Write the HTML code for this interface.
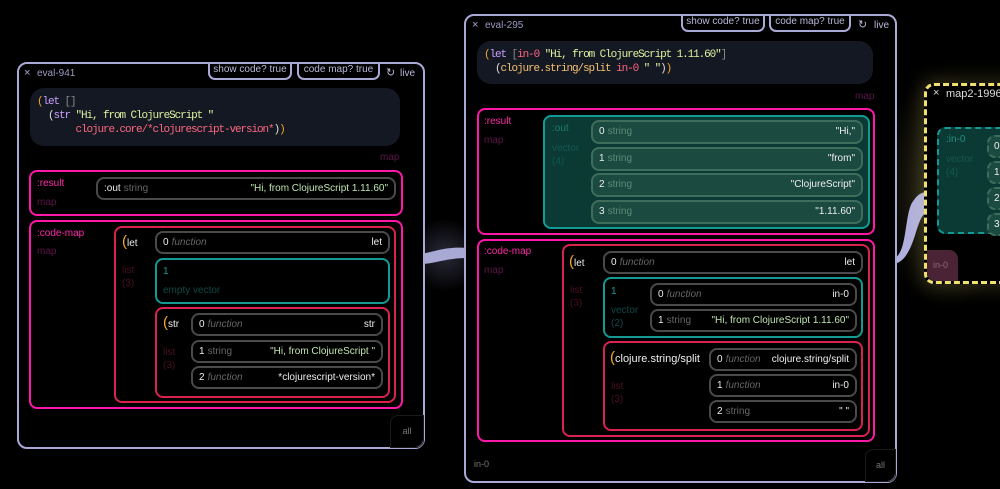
<!DOCTYPE html>
<html><head><meta charset="utf-8"><style>
*{box-sizing:border-box;margin:0;padding:0}
body{width:1000px;height:489px;background:#000;position:relative;overflow:hidden;font-family:"Liberation Sans",sans-serif;font-size:10px;color:#ddd}
.a{position:absolute}
.panel{position:absolute;border:2px solid #a9a9d6;border-radius:10px;background:#000}
.btn{position:absolute;border:2px solid #a9a9d6;border-top:none;border-radius:0 0 7px 7px;color:#b8b8d8;font-size:10px;text-align:center;line-height:16px}
.code{position:absolute;background:#131822;border-radius:14px;font-family:"Liberation Mono",monospace;font-size:11px;letter-spacing:-1.1px;line-height:14px;padding:7px 0 0 7px;white-space:pre;color:#ddd}
.pink{position:absolute;border:2px solid #ff18a8;border-radius:8px}
.red{position:absolute;border:2px solid #d8234f;border-radius:8px}
.teal{position:absolute;border:2px solid #149a94;border-radius:8px}
.pill{position:absolute;border:2px solid #4a4a4a;border-radius:8px;height:23px;font-size:10px;line-height:19px;padding:0 6px;color:#eee}
.pill .r{position:absolute;right:6px;top:0}
.fn{color:#666;font-style:italic;margin-left:3px}
.st{color:#666;margin-left:3px}
.gs{color:#bfe6b0}
.k{color:#ff2aa8;font-size:10px}
.m{color:#5c1648;font-size:10px}
.l{color:#4a1020;font-size:10px;line-height:13px}
.par{color:#f5a623;font-size:15px}
.tp{position:absolute;border:2px solid #3e6d5c;border-radius:8px;height:24px;background:#1b4a40;font-size:10px;line-height:20px;padding:0 6px;color:#eee}
.tp .r{position:absolute;right:6px;top:0}
</style></head><body>

<div class="a" style="left:405px;top:215px;width:80px;height:80px;background:radial-gradient(circle,#2a2a3a 0%,#000 65%)"></div>
<svg class="a" style="left:420px;top:240px" width="50" height="30"><path d="M0 14 C15 12 25 6 48 8 L48 18 C25 18 15 24 0 24 Z" fill="#a9a9d6"/></svg>

<div class="a" style="left:870px;top:60px;width:130px;height:260px;background:radial-gradient(ellipse at 60% 50%,#2e2c1a 0%,#000 65%)"></div>
<svg class="a" style="left:894px;top:180px" width="36" height="90"><path d="M0 78 C14 74 10 30 20 20 C24 14 28 12 34 12 L34 32 C28 34 26 40 22 52 C16 72 10 82 0 84 Z" fill="#b0b0e0"/></svg>

<!-- Panel 1 -->
<div class="panel" style="left:17px;top:62px;width:408px;height:387px"></div>
<div class="a" style="left:24px;top:67px;color:#a9a9d6;font-size:11px">×</div>
<div class="a" style="left:37px;top:68px;color:#9a9ac0;font-size:10px">eval-941</div>
<div class="btn" style="left:208px;top:62px;width:84px">show code? true</div>
<div class="btn" style="left:297px;top:62px;width:83px">code map? true</div>
<div class="a" style="left:386px;top:66px;color:#b8b8d8;font-size:11px">↻</div>
<div class="a" style="left:400px;top:68px;color:#b8b8d8">live</div>
<div class="code" style="left:30px;top:88px;width:370px;height:58px"><span style="color:#f5a623">(</span><span style="color:#c9a0ff">let</span> <span style="color:#888">[]</span>
  (<span style="color:#c9a0ff">str</span> <span style="color:#dff0a0">"Hi, from ClojureScript "</span>
       <span style="color:#ff6680">clojure.core/*clojurescript-version*</span>)<span style="color:#f5a623">)</span></div>
<div class="a m" style="left:380px;top:152px">map</div>

<div class="pink" style="left:29px;top:170px;width:374px;height:46px"></div>
<div class="a k" style="left:37px;top:178px">:result</div>
<div class="a m" style="left:37px;top:197px">map</div>
<div class="pill" style="left:96px;top:177px;width:300px">:out<span class="st">string</span><span class="r gs">"Hi, from ClojureScript 1.11.60"</span></div>

<div class="pink" style="left:29px;top:220px;width:374px;height:189px"></div>
<div class="a k" style="left:37px;top:228px">:code-map</div>
<div class="a m" style="left:37px;top:246px">map</div>
<div class="red" style="left:114px;top:226px;width:282px;height:177px"></div>
<div class="a" style="left:122px;top:233px"><span class="par">(</span><span style="color:#eee">let</span></div>
<div class="a l" style="left:122px;top:264px">list<br>(3)</div>
<div class="pill" style="left:155px;top:231px;width:235px">0<span class="fn">function</span><span class="r">let</span></div>
<div class="teal" style="left:155px;top:258px;width:235px;height:46px"></div>
<div class="a" style="left:163px;top:266px;color:#149a94">1</div>
<div class="a" style="left:163px;top:285px;color:#0d4a46">empty vector</div>
<div class="red" style="left:155px;top:307px;width:235px;height:91px"></div>
<div class="a" style="left:163px;top:314px"><span class="par">(</span><span style="color:#eee">str</span></div>
<div class="a l" style="left:163px;top:346px">list<br>(3)</div>
<div class="pill" style="left:191px;top:313px;width:192px">0<span class="fn">function</span><span class="r">str</span></div>
<div class="pill" style="left:191px;top:340px;width:192px">1<span class="st">string</span><span class="r gs">"Hi, from ClojureScript "</span></div>
<div class="pill" style="left:191px;top:366px;width:192px">2<span class="fn">function</span><span class="r">*clojurescript-version*</span></div>
<div class="a" style="left:390px;top:415px;width:34px;height:33px;border:1px solid #1a1a1a;border-radius:8px 0 8px 0;color:#777;font-size:9px;text-align:center;line-height:30px">all</div>

<!-- Panel 2 -->
<div class="panel" style="left:464px;top:14px;width:433px;height:469px"></div>
<div class="a" style="left:472px;top:19px;color:#a9a9d6;font-size:11px">×</div>
<div class="a" style="left:485px;top:20px;color:#9a9ac0">eval-295</div>
<div class="btn" style="left:681px;top:14px;width:84px">show code? true</div>
<div class="btn" style="left:769px;top:14px;width:82px">code map? true</div>
<div class="a" style="left:858px;top:18px;color:#b8b8d8;font-size:11px">↻</div>
<div class="a" style="left:874px;top:20px;color:#b8b8d8">live</div>
<div class="code" style="left:477px;top:41px;width:396px;height:43px"><span style="color:#f5a623">(</span><span style="color:#c9a0ff">let</span> <span style="color:#888">[</span><span style="color:#ff6680">in-0</span> <span style="color:#dff0a0">"Hi, from ClojureScript 1.11.60"</span><span style="color:#888">]</span>
  (<span style="color:#f5c070">clojure.string/split</span> <span style="color:#ff6680">in-0</span> <span style="color:#dff0a0">" "</span>)<span style="color:#f5a623">)</span></div>
<div class="a m" style="left:855px;top:91px">map</div>

<div class="pink" style="left:477px;top:108px;width:398px;height:127px"></div>
<div class="a k" style="left:484px;top:116px">:result</div>
<div class="a m" style="left:484px;top:135px">map</div>
<div class="teal" style="left:543px;top:115px;width:327px;height:114px;background:#0b3a35"></div>
<div class="a" style="left:552px;top:123px;color:#1f7a70">:out</div>
<div class="a" style="left:552px;top:142px;color:#15574f;line-height:13px">vector<br>(4)</div>
<div class="tp" style="left:591px;top:120px;width:272px">0<span class="st" style="color:#5f8a78">string</span><span class="r">"Hi,"</span></div>
<div class="tp" style="left:591px;top:147px;width:272px">1<span class="st" style="color:#5f8a78">string</span><span class="r">"from"</span></div>
<div class="tp" style="left:591px;top:173px;width:272px">2<span class="st" style="color:#5f8a78">string</span><span class="r">"ClojureScript"</span></div>
<div class="tp" style="left:591px;top:200px;width:272px">3<span class="st" style="color:#5f8a78">string</span><span class="r">"1.11.60"</span></div>

<div class="pink" style="left:477px;top:239px;width:398px;height:203px"></div>
<div class="a k" style="left:484px;top:246px">:code-map</div>
<div class="a m" style="left:484px;top:265px">map</div>
<div class="red" style="left:562px;top:244px;width:308px;height:193px"></div>
<div class="a" style="left:569px;top:253px"><span class="par">(</span><span style="color:#eee">let</span></div>
<div class="a l" style="left:570px;top:284px">list<br>(3)</div>
<div class="pill" style="left:603px;top:251px;width:260px">0<span class="fn">function</span><span class="r">let</span></div>
<div class="teal" style="left:603px;top:277px;width:260px;height:61px"></div>
<div class="a" style="left:611px;top:286px;color:#149a94">1</div>
<div class="a" style="left:611px;top:304px;color:#0d4a46;line-height:13px">vector<br>(2)</div>
<div class="pill" style="left:650px;top:283px;width:207px">0<span class="fn">function</span><span class="r">in-0</span></div>
<div class="pill" style="left:650px;top:309px;width:207px">1<span class="st">string</span><span class="r gs">"Hi, from ClojureScript 1.11.60"</span></div>
<div class="red" style="left:603px;top:341px;width:260px;height:90px"></div>
<div class="a" style="left:610px;top:349px"><span class="par">(</span><span style="color:#eee;font-size:11px">clojure.string/split</span></div>
<div class="a l" style="left:611px;top:380px">list<br>(3)</div>
<div class="pill" style="left:709px;top:348px;width:148px">0<span class="fn">function</span><span class="r">clojure.string/split</span></div>
<div class="pill" style="left:709px;top:374px;width:148px">1<span class="fn">function</span><span class="r">in-0</span></div>
<div class="pill" style="left:709px;top:400px;width:148px">2<span class="st">string</span><span class="r">" "</span></div>
<div class="a" style="left:474px;top:459px;color:#777;font-size:9px">in-0</div>
<div class="a" style="left:865px;top:449px;width:31px;height:33px;border:1px solid #1a1a1a;border-radius:8px 0 8px 0;color:#777;font-size:9px;text-align:center;line-height:30px">all</div>

<!-- Panel 3 -->
<div class="a" style="left:924px;top:83px;width:100px;height:201px;border:3px dashed #f0e070;border-radius:10px;background:#000;box-shadow:0 0 18px 4px rgba(240,224,112,0.18)"></div>
<div class="a" style="left:933px;top:87px;color:#ddd;font-size:11px">×</div>
<div class="a" style="left:946px;top:88px;color:#ddd;font-size:11px;white-space:nowrap">map2-1996d</div>
<div class="a" style="left:937px;top:127px;width:80px;height:107px;border:2px dashed #149a94;border-radius:8px;background:#0b3a35"></div>
<div class="a" style="left:946px;top:134px;color:#2a8a80">:in-0</div>
<div class="a" style="left:946px;top:153px;color:#15574f;line-height:13px">vector<br>(4)</div>
<div class="a" style="left:987px;top:135px;width:30px;height:23px;border:2px dashed #3e6d5c;border-radius:8px;background:#1b4a40;color:#eee;padding-left:5px;line-height:19px">0</div>
<div class="a" style="left:987px;top:161px;width:30px;height:23px;border:2px dashed #3e6d5c;border-radius:8px;background:#1b4a40;color:#eee;padding-left:5px;line-height:19px">1</div>
<div class="a" style="left:987px;top:187px;width:30px;height:23px;border:2px dashed #3e6d5c;border-radius:8px;background:#1b4a40;color:#eee;padding-left:5px;line-height:19px">2</div>
<div class="a" style="left:987px;top:213px;width:30px;height:23px;border:2px dashed #3e6d5c;border-radius:8px;background:#1b4a40;color:#eee;padding-left:5px;line-height:19px">3</div>
<div class="a" style="left:927px;top:250px;width:31px;height:31px;background:#4a2434;border-radius:0 9px 0 8px;color:#8a6a76;font-size:9px;line-height:30px;padding-left:6px">in-0</div>
</body></html>
